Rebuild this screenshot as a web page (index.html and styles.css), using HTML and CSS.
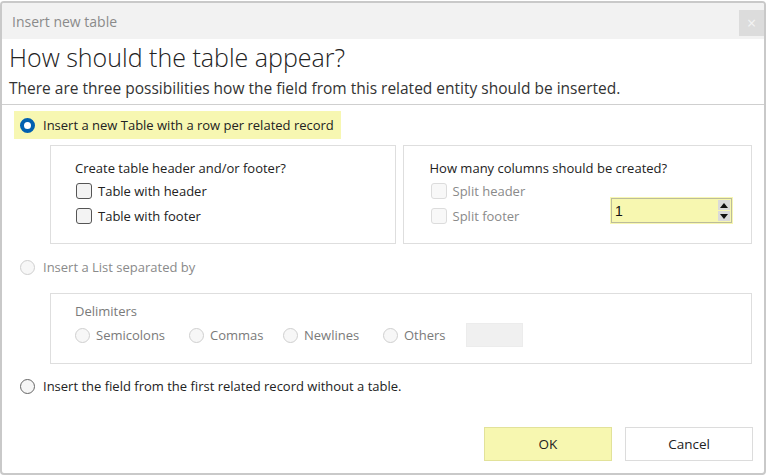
FILE: index.html
```html
<!DOCTYPE html>
<html lang="en">
<head>
    <meta charset="UTF-8">
    <title>Insert new table</title>
    <link rel="stylesheet" href="styles.css">
</head>
<body>

    <div class="dialog">
        <div class="titlebar">
            <span class="title">Insert new table</span>
            <button class="close">&times;</button>
        </div>

        <div class="intro">
            <h1>How should the table appear?</h1>
            <p>There are three possibilities how the field from this related entity should be inserted.</p>
        </div>

        <div class="content">
            <div class="option highlight">
                <span class="radio checked"></span>
                <span>Insert a new Table with a row per related record</span>
            </div>

            <div class="boxes">
                <div class="box">
                    <div class="box-title">Create table header and/or footer?</div>
                    <div class="check-row"><span class="checkbox"></span>Table with header</div>
                    <div class="check-row"><span class="checkbox"></span>Table with footer</div>
                </div>
                <div class="box columns">
                    <div class="box-title">How many columns should be created?</div>
                    <div class="columns-row">
                        <div>
                            <div class="check-row disabled"><span class="checkbox"></span>Split header</div>
                            <div class="check-row disabled"><span class="checkbox"></span>Split footer</div>
                        </div>
                        <div class="spinner">
                            <span class="spinner-value">1</span>
                            <span class="spinner-arrows">
                                <span class="arrow up"></span>
                                <span class="arrow down"></span>
                            </span>
                        </div>
                    </div>
                </div>
            </div>

            <div class="option disabled list-option">
                <span class="radio"></span>
                <span>Insert a List separated by</span>
            </div>

            <div class="box delimiters disabled">
                <div class="box-title">Delimiters</div>
                <div class="delim-row">
                    <span class="delim semicolons"><span class="radio"></span>Semicolons</span>
                    <span class="delim commas"><span class="radio"></span>Commas</span>
                    <span class="delim newlines"><span class="radio"></span>Newlines</span>
                    <span class="delim others"><span class="radio"></span>Others</span>
                    <span class="other-input"></span>
                </div>
            </div>

            <div class="option last-option">
                <span class="radio"></span>
                <span>Insert the field from the first related record without a table.</span>
            </div>
        </div>

        <div class="footer">
            <button class="btn ok">OK</button>
            <button class="btn">Cancel</button>
        </div>
    </div>

</body>
</html>
```

FILE: styles.css
```css
/* Page */
body {
    margin: 0;
    background: white;
    font-family: "Open Sans", "Noto Sans", sans-serif;
    color: #222;
}

.dialog {
    width: 762px;
    height: 470px;
    margin: 1px 0 0 0;
    border: 2px solid #c9c9c9;
    border-radius: 4px;
    background: white;
    overflow: hidden;
}

/* Title bar */
.titlebar {
    display: flex;
    justify-content: space-between;
    align-items: center;
    height: 36px;
    background: #f2f2f2;
    padding-left: 10px;
}

.title {
    font-size: 14px;
    color: #8a8a8a;
}

.close {
    width: 25px;
    height: 26px;
    margin-top: 3px;
    border: none;
    background: #dcdcdc;
    color: #f4f4f4;
    font-size: 16px;
    line-height: 26px;
    padding: 0;
    font-family: inherit;
}

/* Intro */
.intro {
    padding: 0 7px 3px 7px;
    border-bottom: 1px solid #cfcfcf;
}

.intro h1 {
    margin: 0;
    font-size: 25px;
    font-weight: 300;
    line-height: 36px;
    color: #222;
}

.intro p {
    margin: 0;
    font-size: 15.5px;
    line-height: 26px;
    color: #333;
}

/* Content */
.content {
    padding: 6px 12px 0 12px;
    font-size: 13px;
}

.option {
    display: flex;
    align-items: center;
    gap: 8px;
    height: 28px;
    padding-left: 6px;
    white-space: nowrap;
}

.option.highlight {
    width: 321px;
    background: #f7f7b2;
}

.option.disabled {
    color: #8a8a8a;
}

.list-option {
    margin-top: 9px;
}

.last-option {
    margin-top: 8px;
}

.radio {
    display: inline-block;
    box-sizing: border-box;
    width: 15px;
    height: 15px;
    border: 1px solid #666;
    border-radius: 50%;
    background: #f6f6f6;
    flex-shrink: 0;
}

.radio.checked {
    border: 4.5px solid #0060b0;
    background: white;
}

.disabled .radio {
    border-color: #cfcfcf;
    background: #f7f7f7;
}

/* Boxes */
.boxes {
    display: flex;
    gap: 7px;
    margin: 6px 0 0 36px;
}

.box {
    box-sizing: border-box;
    border: 1px solid #dedede;
    padding: 12px 24px 0 24px;
}

.boxes .box {
    height: 99px;
    width: 347px;
}

.boxes .box.columns {
    width: 351px;
    padding-right: 19px;
    padding-left: 26px;
}

.box-title {
    line-height: 20px;
    white-space: nowrap;
}

.columns-row {
    display: flex;
    justify-content: space-between;
    align-items: flex-end;
}

.check-row {
    display: flex;
    align-items: center;
    gap: 6px;
    height: 25px;
    margin-left: 1px;
}

.checkbox {
    display: inline-block;
    box-sizing: border-box;
    width: 16px;
    height: 16px;
    border: 1px solid #555;
    border-radius: 3px;
    background: #f3f3f3;
}

.check-row.disabled {
    color: #8a8a8a;
}

.check-row.disabled .checkbox {
    border-color: #dcdcdc;
    background: #f8f8f8;
}

/* Spinner */
.spinner {
    display: flex;
    justify-content: space-between;
    align-items: center;
    box-sizing: border-box;
    width: 121px;
    height: 25px;
    margin-bottom: 5px;
    border: 1px solid #bcbc9a;
    box-shadow: 0 0 0 1px #f7f7b0;
    background: #f7f7b0;
    padding: 0 1px 0 3px;
    font-family: "Liberation Sans", Arial, sans-serif;
    font-size: 14px;
    color: #111;
}

.spinner-arrows {
    display: flex;
    flex-direction: column;
    gap: 1px;
}

.arrow {
    display: flex;
    justify-content: center;
    align-items: center;
    width: 12px;
    height: 10px;
    background: #dadada;
}

.arrow::after {
    content: "";
    border-left: 4px solid transparent;
    border-right: 4px solid transparent;
}

.arrow.up::after {
    border-bottom: 5px solid #111;
}

.arrow.down::after {
    border-top: 5px solid #111;
}

/* Delimiters */
.box.delimiters {
    height: 71px;
    margin: 12px 0 0 36px;
    padding-top: 7px;
    color: #7a7a7a;
}

.delim-row {
    display: flex;
    align-items: center;
    height: 28px;
}

.delim {
    display: flex;
    align-items: center;
    gap: 6px;
}

.delim.semicolons { width: 114px; }
.delim.commas { width: 94px; }
.delim.newlines { width: 100px; }
.delim.others { width: 83px; }

.other-input {
    width: 57px;
    height: 24px;
    background: #f0f0f0;
    border: 1px solid #ececec;
    box-sizing: border-box;
}

/* Footer */
.footer {
    display: flex;
    justify-content: flex-end;
    gap: 13px;
    padding: 27px 11px 0 0;
}

.btn {
    width: 128px;
    height: 34px;
    border: 1px solid #dcdcdc;
    background: white;
    font-family: inherit;
    font-size: 13.5px;
    color: #222;
}

.btn.ok {
    background: #f7f7b0;
    border-color: #e2e29a;
}
```
